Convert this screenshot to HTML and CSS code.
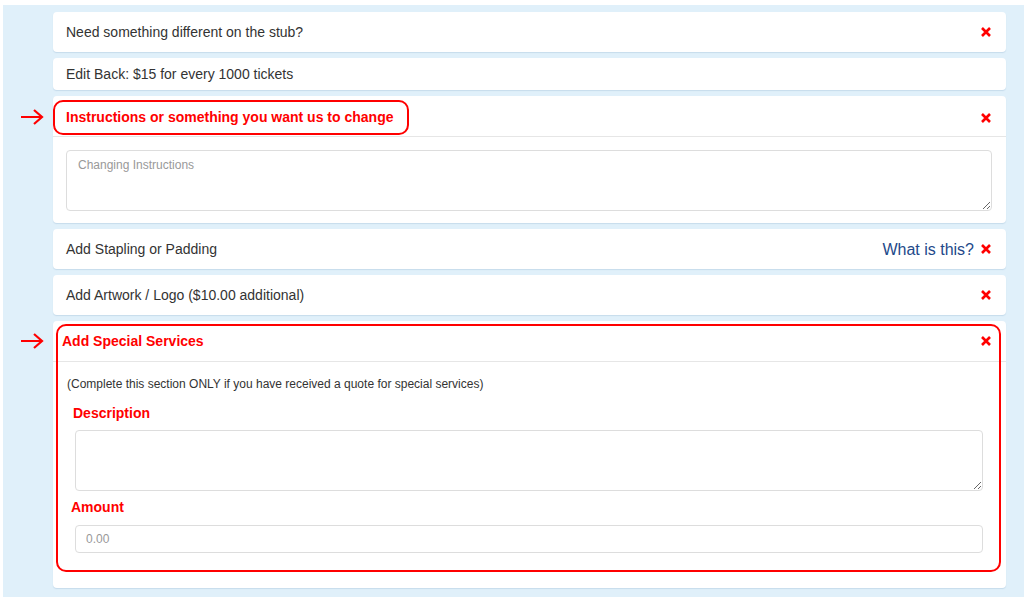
FILE: index.html
```html
<!DOCTYPE html>
<html lang="en">

<head>
    <meta charset="UTF-8">
    <title>Ticket Options</title>
    <link rel="stylesheet" href="styles.css">
</head>

<body>
    <div class="options">
        <div class="panel">
            <div class="panel-head">
                <span class="panel-title">Need something different on the stub?</span>
                <span class="close"><svg viewBox="0 0 10 10" width="10" height="10"><path d="M1 1 L9 9 M9 1 L1 9" /></svg></span>
            </div>
        </div>

        <div class="panel">
            <div class="panel-head short">
                <span class="panel-title">Edit Back: $15 for every 1000 tickets</span>
            </div>
        </div>

        <div class="panel marked">
            <svg class="arrow" viewBox="0 0 24 16" width="24" height="16"><path d="M1 8 H22 M14 1 L22 8 L14 15" /></svg>
            <div class="panel-head bordered flush">
                <span class="panel-title boxed">Instructions or something you want us to change</span>
                <span class="close"><svg viewBox="0 0 10 10" width="10" height="10"><path d="M1 1 L9 9 M9 1 L1 9" /></svg></span>
            </div>
            <div class="panel-body">
                <textarea class="text-box" placeholder="Changing Instructions"></textarea>
            </div>
        </div>

        <div class="panel">
            <div class="panel-head">
                <span class="panel-title">Add Stapling or Padding</span>
                <span class="head-right">
                    <a class="help-link" href="#">What is this?</a>
                    <span class="close"><svg viewBox="0 0 10 10" width="10" height="10"><path d="M1 1 L9 9 M9 1 L1 9" /></svg></span>
                </span>
            </div>
        </div>

        <div class="panel">
            <div class="panel-head">
                <span class="panel-title">Add Artwork / Logo ($10.00 additional)</span>
                <span class="close"><svg viewBox="0 0 10 10" width="10" height="10"><path d="M1 1 L9 9 M9 1 L1 9" /></svg></span>
            </div>
        </div>

        <div class="panel marked services">
            <svg class="arrow" viewBox="0 0 24 16" width="24" height="16"><path d="M1 8 H22 M14 1 L22 8 L14 15" /></svg>
            <div class="outline"></div>
            <div class="panel-head bordered services-head">
                <span class="panel-title red">Add Special Services</span>
                <span class="close"><svg viewBox="0 0 10 10" width="10" height="10"><path d="M1 1 L9 9 M9 1 L1 9" /></svg></span>
            </div>
            <div class="services-body">
                <p class="note">(Complete this section ONLY if you have received a quote for special services)</p>
                <label class="field-label desc" for="description">Description</label>
                <textarea class="text-box field" id="description"></textarea>
                <label class="field-label amount" for="amount">Amount</label>
                <input class="amount-input field" type="text" id="amount" placeholder="0.00">
            </div>
        </div>
    </div>
</body>

</html>
```

FILE: styles.css
```css
body {
    margin: 0;
    padding: 5px 0 0 3px;
    background-color: #fff;
    font-family: "Liberation Sans", Arial, sans-serif;
    color: #333;
}

.options {
    background-color: #e0f0fa;
    padding: 7px 18px 10px 50px;
    display: flex;
    flex-direction: column;
    gap: 6px;
}

.panel {
    background-color: #fff;
    border-radius: 4px;
    box-shadow: 0 1px 1px rgba(120, 160, 190, 0.25);
    position: relative;
}

.panel-head {
    height: 40px;
    box-sizing: border-box;
    display: flex;
    align-items: center;
    justify-content: space-between;
    padding: 0 15px 0 13px;
}

.panel-head.short {
    height: 32px;
}

.panel-head.bordered {
    height: 41px;
    border-bottom: 1px solid #e6e6e6;
}

.panel-head.flush {
    padding: 4px 15px 1px 0;
}

.panel-title {
    font-size: 14px;
}

.panel-title.boxed {
    height: 35px;
    box-sizing: border-box;
    display: flex;
    align-items: center;
    padding: 0 14px 1px 11px;
    border: 2px solid #f00;
    border-radius: 10px;
    color: #f00;
    font-weight: bold;
}

.panel-title.red {
    color: #f00;
    font-weight: bold;
}

.close {
    display: flex;
    width: 10px;
    height: 10px;
}

.close svg path {
    stroke: #f00;
    stroke-width: 2.6;
    fill: none;
}

.head-right {
    display: flex;
    align-items: center;
    gap: 7px;
}

.help-link {
    color: #23498a;
    font-size: 16px;
    text-decoration: none;
    margin-top: 2px;
}

.panel-body {
    padding: 13px 14px 12px 13px;
}

.text-box {
    display: block;
    width: 100%;
    height: 61px;
    box-sizing: border-box;
    border: 1px solid #ddd;
    border-radius: 4px;
    padding: 7px 11px;
    font-family: "Liberation Sans", Arial, sans-serif;
    font-size: 12px;
    color: #555;
    resize: vertical;
}

.text-box::placeholder,
.amount-input::placeholder {
    color: #999;
}

.arrow {
    position: absolute;
    left: -33px;
    top: 13px;
}

.arrow path {
    stroke: #f00;
    stroke-width: 2.2;
    fill: none;
}

.services .arrow {
    top: 12px;
}

.outline {
    position: absolute;
    left: 3px;
    top: 3px;
    right: 5px;
    bottom: 16px;
    border: 2px solid #f00;
    border-radius: 10px;
    pointer-events: none;
}

.services-head {
    height: 40px;
    padding-left: 9px;
}

.services-body {
    padding: 15px 23px 35px 14px;
    display: flex;
    flex-direction: column;
}

.note {
    margin: 0 0 14px;
    font-size: 12px;
    line-height: 14px;
    color: #333;
}

.field-label {
    font-size: 14px;
    line-height: 16px;
    font-weight: bold;
    color: #f00;
}

.field-label.desc {
    margin: 0 0 9px 6px;
}

.field-label.amount {
    margin: 0 0 10px 4px;
}

.field {
    margin-left: 8px;
    width: calc(100% - 8px);
}

.text-box.field {
    margin-bottom: 8px;
}

.amount-input {
    height: 28px;
    box-sizing: border-box;
    border: 1px solid #ddd;
    border-radius: 4px;
    padding: 0 10px;
    font-family: "Liberation Sans", Arial, sans-serif;
    font-size: 12px;
    color: #555;
}
```
